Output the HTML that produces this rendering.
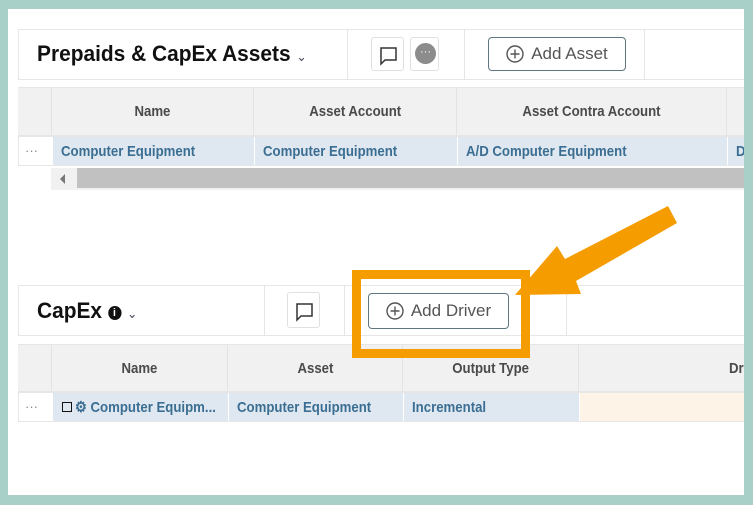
<!DOCTYPE html>
<html><head><meta charset="utf-8"><style>
*{margin:0;padding:0;box-sizing:border-box}
body{width:753px;height:505px;background:#a8cfc8;position:relative;overflow:hidden;font-family:"Liberation Sans",sans-serif}
.a{position:absolute}
.white{left:8px;top:9px;width:736px;height:486px;background:#fff}
.panel{border:1px solid #e6e6e6;background:#fff}
.vd{width:1px;background:#e6e6e6}
.btn{border:1px solid #e0e0e0;border-radius:3px;background:#fff}
.ob{border:1px solid #5f7580;border-radius:4px;background:#fff;color:#555;font-size:17px;display:flex;align-items:center;justify-content:center;gap:7px}
.th{background:#f1f1f1;border-top:1px solid #e6e6e6;border-bottom:2px solid #e6e6e6}
.hc{position:absolute;top:0;height:100%;border-left:1px solid #e3e3e3;display:flex;align-items:center;justify-content:center;font-weight:bold;font-size:15px;color:#4a4a4a}
.rc{position:absolute;top:0;height:100%;border-left:1px solid #fff;display:flex;align-items:center;padding-left:8px;font-weight:bold;font-size:15px;color:#3b6e92;background:#dfe8f0;white-space:nowrap;overflow:hidden}
.c{display:inline-block;transform:scaleX(0.88);transform-origin:left center}
.hc .c{transform-origin:center}
.title{font-weight:bold;color:#111}
</style></head><body>
<div class="a white"></div>

<div class="a panel" style="left:18px;top:29px;width:740px;height:51px"></div>
<div class="a title" style="left:37px;top:41px;font-size:22px;white-space:nowrap"><span class="c" style="transform:scaleX(0.95)">Prepaids &amp; CapEx Assets <span style="font-size:13px;color:#445;font-weight:normal">&#8964;</span></span></div>
<div class="a vd" style="left:347px;top:30px;height:49px"></div>
<div class="a vd" style="left:464px;top:30px;height:49px"></div>
<div class="a vd" style="left:644px;top:30px;height:49px"></div>
<div class="a btn" style="left:371px;top:37px;width:33px;height:34px"><svg width="33" height="34"><path d="M9 10h15v12H13l-4 4z" fill="none" stroke="#333" stroke-width="1.5"/></svg></div>
<div class="a btn" style="left:410px;top:37px;width:29px;height:34px"><div class="a" style="left:4px;top:5px;width:21px;height:21px;border-radius:50%;background:#8c8c8c;color:#fff;font-size:11px;text-align:center;line-height:19px">&middot;&middot;&middot;</div></div>
<div class="a ob" style="left:488px;top:37px;width:138px;height:34px"><svg width="18" height="18"><circle cx="9" cy="9" r="8" fill="none" stroke="#555" stroke-width="1.4"/><path d="M9 4.5v9M4.5 9h9" stroke="#555" stroke-width="1.4"/></svg>Add Asset</div>

<div class="a th" style="left:18px;top:87px;width:740px;height:50px">
<div class="hc" style="left:33px;width:202px"><span class="c">Name</span></div>
<div class="hc" style="left:235px;width:203px"><span class="c">Asset Account</span></div>
<div class="hc" style="left:438px;width:270px"><span class="c">Asset Contra Account</span></div>
<div class="hc" style="left:708px;width:40px"></div>
</div>
<div class="a" style="left:18px;top:137px;width:740px;height:29px;border-bottom:1px solid #e6e6e6;border-left:1px solid #e6e6e6">
<div class="a" style="left:6px;top:6px;color:#888;font-size:13px">&middot;&middot;&middot;</div>
<div class="rc" style="left:33px;width:202px"><span class="c">Computer Equipment</span></div>
<div class="rc" style="left:235px;width:203px"><span class="c">Computer Equipment</span></div>
<div class="rc" style="left:438px;width:270px"><span class="c">A/D Computer Equipment</span></div>
<div class="rc" style="left:708px;width:40px"><span class="c">D</span></div>
</div>
<div class="a" style="left:51px;top:168px;width:700px;height:22px;background:#f1f1f1"></div>
<div class="a" style="left:77px;top:168px;width:680px;height:20px;background:#c1c1c1"></div>
<div class="a" style="left:60px;top:174px;width:0;height:0;border-top:5px solid transparent;border-bottom:5px solid transparent;border-right:5px solid #777"></div>

<div class="a panel" style="left:18px;top:285px;width:740px;height:51px"></div>
<div class="a title" style="left:37px;top:298px;font-size:22px;white-space:nowrap"><span class="c" style="transform:scaleX(0.95)">CapEx <span style="display:inline-block;width:14px;height:14px;border-radius:50%;background:#111;color:#fff;font-size:11px;text-align:center;line-height:14px;vertical-align:2px">i</span> <span style="font-size:13px;color:#445;font-weight:normal">&#8964;</span></span></div>
<div class="a vd" style="left:264px;top:286px;height:49px"></div>
<div class="a vd" style="left:344px;top:286px;height:49px"></div>
<div class="a vd" style="left:566px;top:286px;height:49px"></div>
<div class="a btn" style="left:287px;top:292px;width:33px;height:36px"><svg width="33" height="36"><path d="M9 11h15v12H13l-4 4z" fill="none" stroke="#333" stroke-width="1.5"/></svg></div>
<div class="a ob" style="left:368px;top:293px;width:141px;height:36px"><svg width="18" height="18"><circle cx="9" cy="9" r="8" fill="none" stroke="#555" stroke-width="1.4"/><path d="M9 4.5v9M4.5 9h9" stroke="#555" stroke-width="1.4"/></svg>Add Driver</div>

<div class="a th" style="left:18px;top:344px;width:740px;height:49px">
<div class="hc" style="left:33px;width:176px"><span class="c">Name</span></div>
<div class="hc" style="left:209px;width:175px"><span class="c">Asset</span></div>
<div class="hc" style="left:384px;width:176px"><span class="c">Output Type</span></div>
<div class="hc" style="left:560px;width:200px;justify-content:flex-start;padding-left:149px"><span class="c">Dr</span></div>
</div>
<div class="a" style="left:18px;top:393px;width:740px;height:29px;border-bottom:1px solid #e6e6e6;border-left:1px solid #e6e6e6">
<div class="a" style="left:6px;top:6px;color:#888;font-size:13px">&middot;&middot;&middot;</div>
<div class="rc" style="left:33px;width:176px;padding-left:9px"><span style="display:inline-block;flex:none;width:10px;height:10px;border:1px solid #111;margin-right:3px"></span><span class="c">&#9881; Computer Equipm...</span></div>
<div class="rc" style="left:209px;width:175px"><span class="c">Computer Equipment</span></div>
<div class="rc" style="left:384px;width:176px"><span class="c">Incremental</span></div>
<div class="rc" style="left:560px;width:200px;background:#fdf3e6"></div>
</div>

<div class="a" style="left:352px;top:270px;width:178px;height:88px;border:9px solid #f59c00"></div>
<svg class="a" style="left:0;top:0" width="753" height="505"><polygon points="668,206 677,223 576,281 581,294 515,295 557,246 565,259" fill="#f59c00"/></svg>

<div class="a" style="left:744px;top:0;width:9px;height:505px;background:#a8cfc8"></div>
<div class="a" style="left:0;top:495px;width:753px;height:10px;background:#a8cfc8"></div>
</body></html>
